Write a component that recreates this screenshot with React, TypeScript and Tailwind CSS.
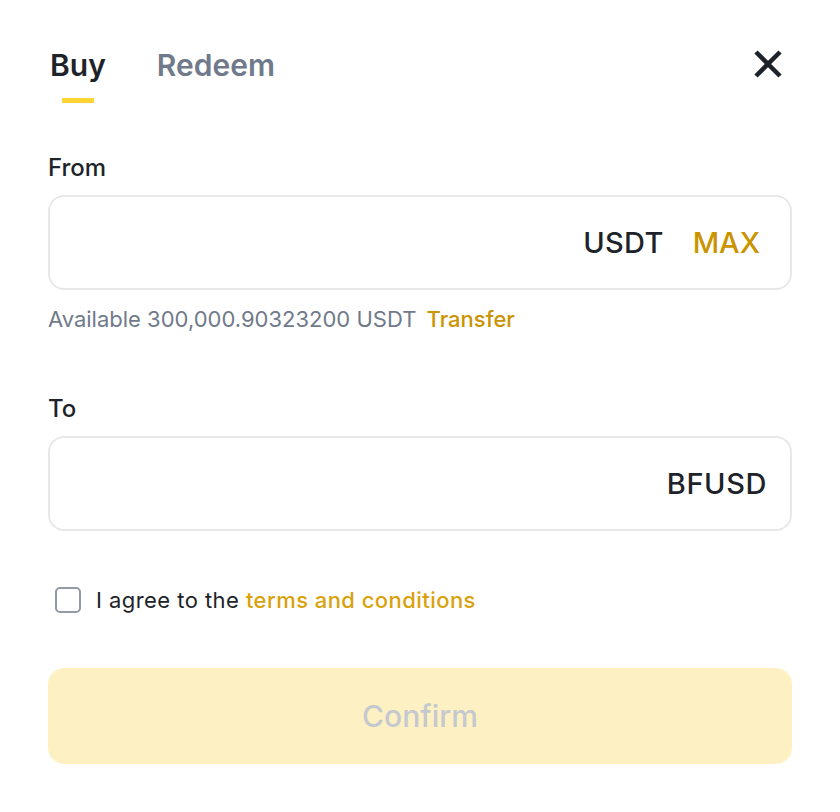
import { useState } from 'react';

export default function App() {
    const [tab, setTab] = useState<'buy' | 'redeem'>('buy');
    const [agree, setAgree] = useState(false);

    return (
        <div className="min-h-screen w-[840px] bg-white px-12 pt-[44px] font-['Inter',sans-serif] text-[#1e2329]">
            <div className="flex items-start justify-between">
                <div className="flex gap-[51px] pl-[2px]">
                    <button onClick={() => setTab('buy')} className="flex flex-col items-center">
                        <span className={`text-[30px] font-semibold leading-[42px] ${tab === 'buy' ? 'text-[#1e2329]' : 'text-[#707a8a]'}`}>Buy</span>
                        <span className={`mt-[12px] h-[5px] w-8 ${tab === 'buy' ? 'bg-[#fcd535]' : 'bg-transparent'}`} />
                    </button>
                    <button onClick={() => setTab('redeem')} className="flex flex-col items-center">
                        <span className={`text-[30px] font-semibold leading-[42px] ${tab === 'redeem' ? 'text-[#1e2329]' : 'text-[#707a8a]'}`}>Redeem</span>
                        <span className={`mt-[12px] h-[5px] w-8 ${tab === 'redeem' ? 'bg-[#fcd535]' : 'bg-transparent'}`} />
                    </button>
                </div>
                <button className="mt-[5px] mr-[9px]">
                    <svg width="30" height="30" viewBox="0 0 30 30" fill="none">
                        <path d="M3 3L27 27M27 3L3 27" stroke="#1e2329" strokeWidth="4.5" />
                    </svg>
                </button>
            </div>

            <div className="mt-[50px] text-[24px] font-medium leading-[30px]">From</div>
            <div className="mt-[12px] flex h-[95px] items-center justify-end rounded-2xl border-2 border-[#e6e8ea] px-[30px]">
                <span className="text-[29px] font-medium tracking-[0.01em]">USDT</span>
                <button className="ml-[29px] text-[29px] font-medium text-[#c99400]">MAX</button>
            </div>
            <div className="mt-[15px] text-[22px] leading-[28px] text-[#707a8a]">
                Available 300,000.90323200 USDT <span className="ml-1 font-medium text-[#c99400]">Transfer</span>
            </div>

            <div className="mt-[61px] text-[24px] font-medium leading-[30px]">To</div>
            <div className="mt-[12px] flex h-[95px] items-center justify-end rounded-2xl border-2 border-[#e6e8ea] px-[23px]">
                <span className="text-[29px] font-medium tracking-[0.02em]">BFUSD</span>
            </div>

            <label className="mt-[54px] flex items-center gap-[15px] pl-[7px]">
                <input
                    type="checkbox"
                    checked={agree}
                    onChange={(e) => setAgree(e.target.checked)}
                    className="h-[26px] w-[26px] appearance-none rounded-[5px] border-2 border-[#929aa5] bg-white"
                />
                <span className="text-[22px] leading-[30px] tracking-[0.02em]">
                    I agree to the <span className="font-medium text-[#d9a20c]">terms and conditions</span>
                </span>
            </label>

            <button
                disabled={!agree}
                className="mt-[53px] flex h-[96px] w-full items-center justify-center rounded-2xl bg-[#fdf1c3] text-[30px] font-medium text-[#c5c8ce]"
            >
                Confirm
            </button>
        </div>
    );
}
